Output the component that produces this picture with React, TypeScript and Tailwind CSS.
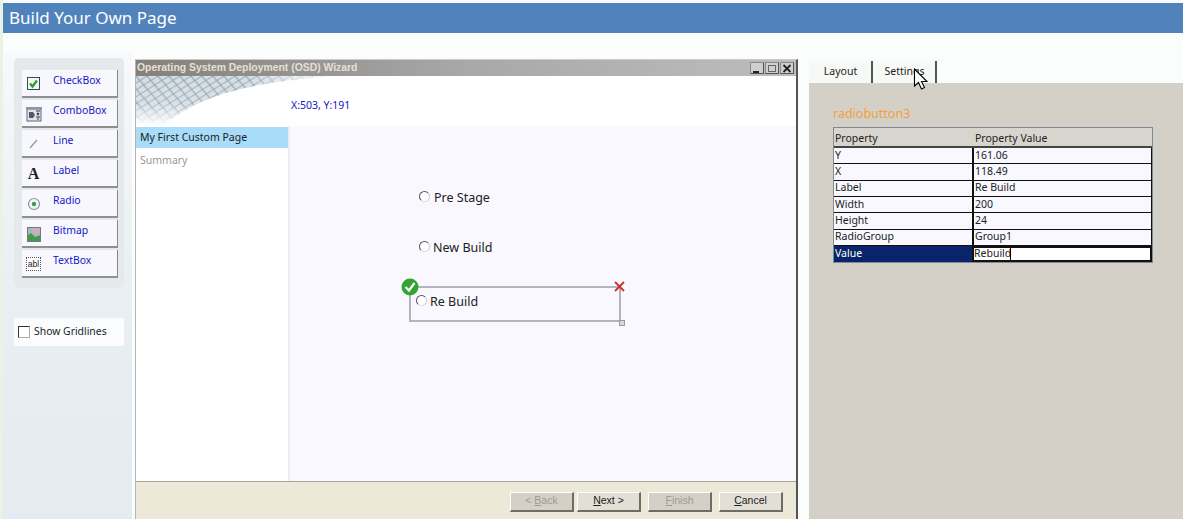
import React from "react";

const font = { fontFamily: '"Noto Sans","Open Sans",sans-serif' };

function ToolIcon({ name }: { name: string }) {
  switch (name) {
    case "CheckBox":
      return (
        <svg width="14" height="14" viewBox="0 0 14 14">
          <rect x="0.5" y="0.5" width="12" height="12" fill="#f4f7f4" stroke="#2f4f4f" />
          <path d="M3 6.5 L5.5 9.5 L10 3.5" fill="none" stroke="#2ca02c" strokeWidth="2.4" />
        </svg>
      );
    case "ComboBox":
      return (
        <svg width="16" height="16" viewBox="0 0 16 16">
          <rect x="1" y="3" width="14" height="12" fill="#dfe4ea" stroke="#667" />
          <rect x="0" y="1" width="16" height="2" fill="#8d96a0" />
          <path d="M3 6h4l2 3-2 3H3z" fill="#556" />
          <path d="M10 5h4M11 7l2 2M13 7l-2 2M10 11h4M11 13h2" stroke="#334" strokeWidth="1.2" />
        </svg>
      );
    case "Line":
      return (
        <svg width="14" height="14" viewBox="0 0 14 14">
          <path d="M3 11 L10 3" stroke="#9a9a9a" strokeWidth="1.4" />
        </svg>
      );
    case "Label":
      return <span className="font-bold text-[16px] leading-none text-[#222]" style={{ fontFamily: '"Liberation Serif",serif' }}>A</span>;
    case "Radio":
      return (
        <svg width="14" height="14" viewBox="0 0 14 14">
          <circle cx="7" cy="7" r="5.5" fill="#f4f7f7" stroke="#7d9aa0" strokeWidth="1.2" />
          <circle cx="7" cy="7" r="2.2" fill="#3d9a5a" />
        </svg>
      );
    case "Bitmap":
      return (
        <svg width="14" height="15" viewBox="0 0 14 15">
          <rect x="0" y="0" width="14" height="15" fill="#a9b7bd" />
          <rect x="6" y="1" width="7" height="5" fill="#d8a8b8" />
          <path d="M0 15V9l4-3 4 4 6-2v7z" fill="#3f9a4e" />
          <rect x="0.5" y="0.5" width="13" height="14" fill="none" stroke="#777" />
        </svg>
      );
    default:
      return (
        <span className="flex h-[14px] w-[15px] shrink-0 items-center justify-center overflow-hidden border border-dotted border-[#555] bg-white text-[8.5px] leading-none text-[#222]" style={{ fontFamily: '"Liberation Sans",sans-serif' }}>
          abl
        </span>
      );
  }
}

const tools = ["CheckBox", "ComboBox", "Line", "Label", "Radio", "Bitmap", "TextBox"];
const rows = [
  ["Y", "161.06"],
  ["X", "118.49"],
  ["Label", "Re Build"],
  ["Width", "200"],
  ["Height", "24"],
  ["RadioGroup", "Group1"],
];

function Radio({ label, className, gap }: { label: string; className: string; gap: string }) {
  return (
    <div className={`absolute flex items-center text-[12.5px] leading-none text-[#222] ${gap} ${className}`}>
      <span className="-mt-[3px] h-[11px] w-[11px] rounded-full border-[1.5px] border-[#555] border-r-[#ccc] border-b-[#ddd] bg-white" />
      <span>{label}</span>
    </div>
  );
}

function WizButton({ label, disabled, className = "" }: { label: string[]; disabled?: boolean; className?: string }) {
  return (
    <div
      className={`flex h-[20px] w-[64px] items-center justify-center whitespace-pre border-r-2 border-b-2 border-l border-t border-r-[#6f6c62] border-b-[#6f6c62] border-l-white border-t-white text-[10.5px] ${
        disabled ? "bg-[#d4d0c8] text-[#9d9a92]" : "bg-[#e2dfd6] text-[#222]"
      } ${className}`}
      style={{ fontFamily: '"Liberation Sans",sans-serif' }}
    >
      {label[0]}
      <span className="underline">{label[1]}</span>
      {label[2]}
    </div>
  );
}

function WinGlyph({ kind }: { kind: string }) {
  return (
    <span className="flex h-[12px] w-[14px] items-center justify-center border border-[#8a8a8a] border-b-[#555] border-r-[#555] bg-[#cfcfcf]">
      <svg width="10" height="9" viewBox="0 0 10 9">
        {kind === "min" && <rect x="1" y="7" width="6" height="2" fill="#222" />}
        {kind === "max" && <rect x="1.5" y="1.5" width="7" height="6" fill="none" stroke="#666" />}
        {kind === "close" && <path d="M1.5 1 L8.5 8 M8.5 1 L1.5 8" stroke="#222" strokeWidth="1.8" />}
      </svg>
    </span>
  );
}

export default function App() {
  return (
    <div className="flex h-[519px] w-[1183px] flex-col overflow-hidden border-l-[3px] border-l-[#e9f2e3] bg-[#fbfcfc] pt-[3px]" style={font}>
      <div className="flex h-[30px] shrink-0 items-center bg-[#5083bb] pl-[6px] text-[17px] text-white">Build Your Own Page</div>

      <div className="flex min-h-0 flex-1 pt-[25px]">
        {/* Left toolbox */}
        <div className="-mt-[5px] flex w-[129px] shrink-0 flex-col bg-gradient-to-b from-[#f7f9fa] via-[#e9eff3] to-[#e4ecf1] pl-[11px]">
          <div className="mt-[5px] flex h-[230px] w-[110px] flex-col gap-[1.6px] rounded-[5px] bg-[#e6e9eb] px-[8px] pt-[12px]">
            {tools.map((t) => (
              <div key={t} className="flex h-[28.4px] w-[96px] shrink-0 border-r border-b-2 border-r-[#8a8a8a] border-b-[#8f8f8f] bg-[#f7f7fd]">
                <div className="flex w-[21px] shrink-0 items-center justify-center pl-[2px] pt-[2px]">
                  <ToolIcon name={t} />
                </div>
                <span className="ml-[10px] pt-[2px] text-[10.4px] leading-[16px] text-[#1515c4]">{t}</span>
              </div>
            ))}
          </div>
          <div className="mt-[30px] flex h-[28px] w-[110px] items-center rounded-[2px] bg-[#fafcfd] pl-[4px] text-[10.4px] text-[#222]">
            <span className="mr-[4px] h-[12px] w-[12px] border border-[#333] border-r-[#aaa] border-b-[#aaa] bg-white" />
            Show Gridlines
          </div>
        </div>

        {/* Wizard */}
        <div className="mt-[1px] ml-[3px] flex w-[663px] shrink-0 flex-col border-r-2 border-l border-t border-r-[#555] border-l-[#b5b5b5] border-t-[#ccc] bg-white">
          <div className="flex h-[16px] shrink-0 items-center justify-between bg-gradient-to-r from-[#85807a] via-[#a8a8a8] to-[#bdbdbd] pl-[1px] pr-[2px]">
            <span className="whitespace-nowrap text-[10.4px] font-bold text-[#e4e0d8]" style={{ fontFamily: '"Liberation Sans",sans-serif' }}>
              Operating System Deployment (OSD) Wizard
            </span>
            <div className="flex gap-[1px]">
              <WinGlyph kind="min" />
              <WinGlyph kind="max" />
              <WinGlyph kind="close" />
            </div>
          </div>

          <div className="relative flex h-[50px] shrink-0 items-center bg-white pl-[155px]">
            <svg width="200" height="50" viewBox="0 0 200 50" className="absolute left-0 top-0">
              <defs>
                <pattern id="mesh" width="11" height="9" patternUnits="userSpaceOnUse" patternTransform="skewX(-20)">
                  <path d="M0 0 L11 9 M11 0 L0 9" stroke="#8fa3b0" strokeWidth="1" fill="none" />
                </pattern>
                <linearGradient id="fade" x1="0" y1="0" x2="0" y2="1">
                  <stop offset="0" stopColor="#fff" stopOpacity="0" />
                  <stop offset="0.55" stopColor="#fff" stopOpacity="0.15" />
                  <stop offset="1" stopColor="#fff" stopOpacity="1" />
                </linearGradient>
                <linearGradient id="fadeX" x1="0" y1="0" x2="1" y2="0">
                  <stop offset="0.55" stopColor="#fff" stopOpacity="0" />
                  <stop offset="1" stopColor="#fff" stopOpacity="1" />
                </linearGradient>
              </defs>
              <path d="M0 0H190V1C120 6 62 18 28 50H0z" fill="#d5dde3" />
              <path d="M0 0H190V1C120 6 62 18 28 50H0z" fill="url(#mesh)" />
              <rect width="200" height="50" fill="url(#fade)" />
              <rect width="200" height="50" fill="url(#fadeX)" />
            </svg>
            <span className="relative mt-[9px] text-[10.5px] text-[#1515c4]">X:503, Y:191</span>
          </div>

          <div className="flex min-h-0 flex-1 bg-[#f8f8fe]">
            <div className="flex w-[154px] shrink-0 flex-col border-r-[2px] border-r-[#eeeeee] bg-white pt-[1px]">
              <div className="flex h-[21px] items-center bg-[#a8dcf8] pl-[4px] pt-[1px] text-[10.5px] text-[#222]">My First Custom Page</div>
              <div className="flex h-[24px] items-center pl-[4px] pt-[2px] text-[10.5px] text-[#999]">Summary</div>
            </div>
            <div className="relative flex-1">
              <Radio label="Pre Stage" gap="gap-[4px]" className="left-[129px] top-[66px]" />
              <Radio label="New Build" gap="gap-[3px]" className="left-[129px] top-[116px]" />
              <div className="absolute left-[119px] top-[160px] h-[36px] w-[212px] border-2 border-[#b4b4bc]" />
              <Radio label="Re Build" gap="gap-[3px]" className="left-[126px] top-[170px]" />
              <svg className="absolute left-[111px] top-[152px]" width="18" height="18" viewBox="0 0 18 18">
                <circle cx="9" cy="9" r="8.5" fill="#31a52f" />
                <path d="M4.5 9 L8 12.5 L13.5 5" fill="none" stroke="#fff" strokeWidth="2.2" />
              </svg>
              <svg className="absolute left-[324px] top-[155px]" width="11" height="11" viewBox="0 0 11 11">
                <path d="M1 1 L10 10 M10 1 L1 10" stroke="#c9312b" strokeWidth="1.8" />
              </svg>
              <span className="absolute left-[329px] top-[194px] h-[6px] w-[6px] border border-[#999] bg-[#d6d6dc]" />
            </div>
          </div>

          <div className="flex h-[38px] shrink-0 items-center justify-end gap-[7px] border-t border-t-[#a8a498] bg-[#ece9d8] pt-[2px] pr-[13px]">
            <WizButton label={["< ", "B", "ack"]} disabled className="-mr-[4px]" />
            <WizButton label={["", "N", "ext >"]} />
            <WizButton label={["", "F", "inish"]} disabled />
            <WizButton label={["", "C", "ancel"]} />
          </div>
        </div>

        {/* Right panel */}
        <div className="mt-[1px] ml-[11px] flex min-w-0 flex-1 flex-col">
          <div className="flex h-[24px] shrink-0 pt-[2px] text-[10.5px] text-[#222]">
            <span className="flex w-[64px] items-center justify-center border-r-2 border-r-[#555] bg-[#f7f9f7] pl-[1px]">Layout</span>
            <span className="flex w-[64px] items-center justify-center border-r-2 border-r-[#555] bg-[#f7f9f7] pl-[1px]">Settings</span>
          </div>
          <div className="relative flex-1 bg-[#d4d0c8] pl-[24px] pt-[23px]">
            <svg className="absolute left-[104px] top-[-15px]" width="18" height="24" viewBox="0 0 18 24">
              <path d="M1.5 1 V18 L5.5 14.5 L8.5 21 L11.5 19.5 L8.5 13.5 L14 13.5 Z" fill="#fff" stroke="#000" strokeWidth="1.1" />
            </svg>
            <div className="text-[12.5px] leading-[16px] text-[#f0a040]">radiobutton3</div>
            <div className="mt-[5px] w-[320px] border border-[#7f8a96] text-[10.5px] text-[#222]">
              <div className="flex h-[20px] items-center border-b-2 border-b-[#444] bg-[#d8d5ce] pt-[3px]">
                <span className="w-[141px] pl-[1px]">Property</span>
                <span>Property Value</span>
              </div>
              {rows.map(([k, v]) => (
                <div key={k} className="flex h-[16.33px] items-center border-b border-b-[#111] bg-[#f8f8fe]">
                  <span className="w-[138px] pl-[1px]">{k}</span>
                  <span className="flex h-full flex-1 items-center border-l-2 border-r border-l-[#111] border-r-[#111] pl-[1px]">{v}</span>
                </div>
              ))}
              <div className="flex h-[16px] items-center bg-[#0a246a] text-white">
                <span className="w-[138px] pl-[1px]">Value</span>
                <span className="flex h-full flex-1 items-center border-2 border-[#111] bg-white text-[#222]">
                  Rebuild<span className="ml-[-1px] h-[12px] w-px bg-black" />
                </span>
              </div>
            </div>
          </div>
        </div>
      </div>
    </div>
  );
}
